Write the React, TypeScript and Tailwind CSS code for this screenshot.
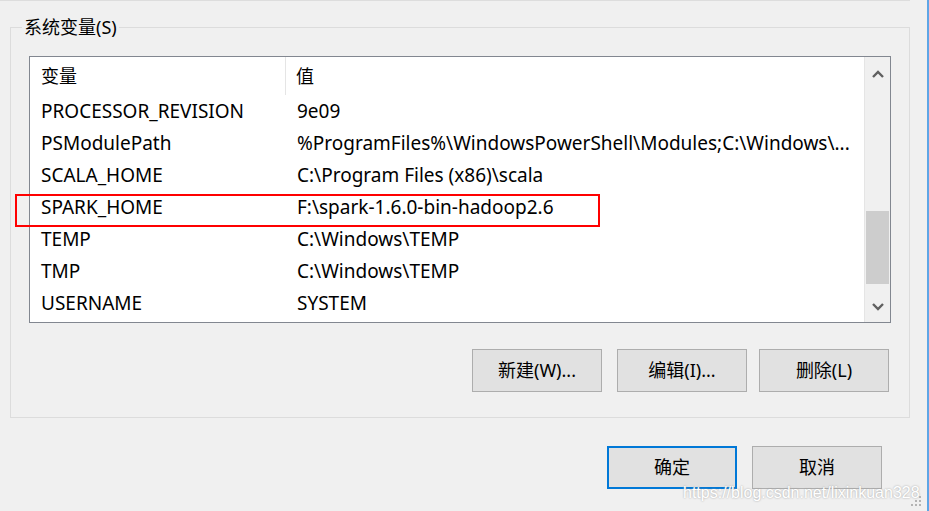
const rows: [string, string][] = [
  ["PROCESSOR_REVISION", "9e09"],
  ["PSModulePath", "%ProgramFiles%\\WindowsPowerShell\\Modules;C:\\Windows\\..."],
  ["SCALA_HOME", "C:\\Program Files (x86)\\scala"],
  ["SPARK_HOME", "F:\\spark-1.6.0-bin-hadoop2.6"],
  ["TEMP", "C:\\Windows\\TEMP"],
  ["TMP", "C:\\Windows\\TEMP"],
  ["USERNAME", "SYSTEM"],
];

const font = "font-['Noto_Sans','Noto_Sans_CJK_SC',sans-serif]";

function Btn({ label, primary }: { label: string; primary?: boolean }) {
  return (
    <button
      className={`w-[130px] h-[43px] bg-[#e1e1e1] text-[18px] text-black flex items-center justify-center ${
        primary ? "border-2 border-[#0078d7]" : "border border-[#adadad]"
      }`}
    >
      {label}
    </button>
  );
}

function Chevron({ up }: { up?: boolean }) {
  return (
    <svg width="14" height="10" viewBox="0 0 14 10">
      <path
        d={up ? "M2 8 L7 3 L12 8" : "M2 2 L7 7 L12 2"}
        fill="none"
        stroke="#606060"
        strokeWidth="2.4"
      />
    </svg>
  );
}

export default function App() {
  return (
    <div className={`relative w-[929px] h-[511px] overflow-hidden bg-[#f0f0f0] text-black ${font}`}>
      <div className="h-px w-[910px] bg-[#dddddd]" />

      {/* system variables group */}
      <div className="relative ml-[10px] mt-[26px] w-[900px] h-[391px] border border-[#dcdcdc]">
        <div className="absolute -top-[13px] left-[11px] bg-[#f0f0f0] px-[2px] text-[18px] leading-[24px]">
          系统变量(S)
        </div>

        <div className="ml-[18px] mt-[28px] w-[862px] h-[267px] border border-[#828790] bg-white flex">
          <div className="flex-1 flex flex-col">
            <div className="h-[38px] flex items-center text-[18px]">
              <div className="w-[256px] h-full pl-[11px] flex items-center border-r border-[#e5e5e5]">变量</div>
              <div className="pl-[10px]">值</div>
            </div>
            {rows.map(([k, v]) => (
              <div key={k} className="h-[32px] flex items-center text-[19px] whitespace-nowrap">
                <div className="w-[257px] pl-[11px]">{k}</div>
                <div className="pl-[10px]">{v}</div>
              </div>
            ))}
          </div>

          {/* scrollbar */}
          <div className="w-[26px] bg-[#f0f0f0] flex flex-col border-l border-[#e5e5e5]">
            <div className="h-[33px] flex items-center justify-center">
              <Chevron up />
            </div>
            <div className="h-[121px]" />
            <div className="mx-[1px] h-[73px] bg-[#cdcdcd]" />
            <div className="flex-1 flex items-end justify-center pb-[10px]">
              <Chevron />
            </div>
          </div>
        </div>

        <div className="mt-[26px] ml-[461px] flex gap-[15px]">
          <Btn label="新建(W)..." />
          <Btn label="编辑(I)..." />
          <div className="-ml-[3px]">
            <Btn label="删除(L)" />
          </div>
        </div>
      </div>

      <div className="mt-[28px] ml-[607px] flex gap-[15px]">
        <Btn label="确定" primary />
        <Btn label="取消" />
      </div>

      {/* highlight box */}
      <div className="absolute left-[15px] top-[194px] w-[585px] h-[33px] border-2 border-[#ff0000]" />

      {/* watermark */}
      <div className="absolute left-[683px] top-[481px] text-[16px] text-white font-['Liberation_Sans',sans-serif] [text-shadow:0_0_2px_#9a9a9a]">
        https://blog.csdn.net/lixinkuan328
      </div>

      {/* size grip */}
      <svg className="absolute left-[911px] top-[496px]" width="12" height="12" viewBox="0 0 12 12">
        <rect x="8" y="0" width="2" height="2" fill="#b4b4b4" />
        <rect x="4" y="4" width="2" height="2" fill="#b4b4b4" />
        <rect x="8" y="4" width="2" height="2" fill="#b4b4b4" />
        <rect x="0" y="8" width="2" height="2" fill="#b4b4b4" />
        <rect x="4" y="8" width="2" height="2" fill="#b4b4b4" />
        <rect x="8" y="8" width="2" height="2" fill="#b4b4b4" />
      </svg>

      <div className="absolute right-0 top-0 w-[2px] h-full bg-[#5ea6e6]" />
    </div>
  );
}
